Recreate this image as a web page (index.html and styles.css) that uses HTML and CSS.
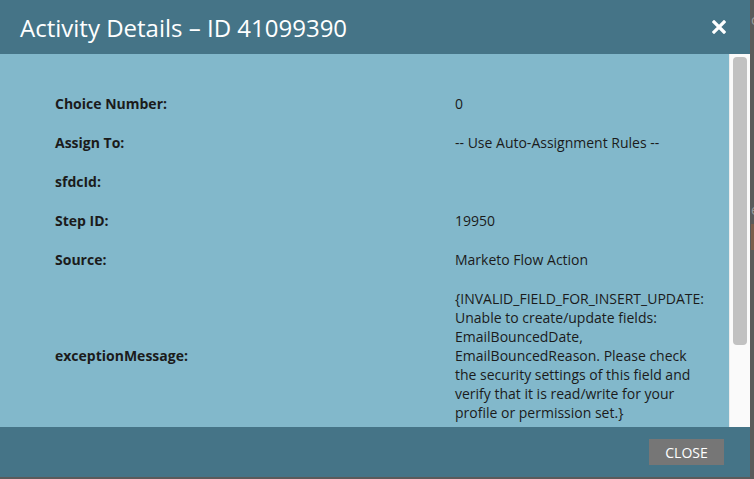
FILE: index.html
```html
<!DOCTYPE html>
<html lang="en">
<head>
    <meta charset="UTF-8">
    <title>Activity Details</title>
    <link rel="stylesheet" href="styles.css">
</head>
<body>
    <div class="modal">
        <div class="modal-header">
            <h1 class="modal-title">Activity Details &ndash; ID 41099390</h1>
            <button class="modal-x" aria-label="Close">
                <svg width="14" height="14" viewBox="0 0 14 14">
                    <path d="M2 2 L12 12 M12 2 L2 12" stroke="#fff" stroke-width="3.2" stroke-linecap="square"/>
                </svg>
            </button>
        </div>
        <div class="modal-body">
            <div class="body-content">
                <div class="details">
                    <div class="label">Choice Number:</div>
                    <div class="value">0</div>
                    <div class="label">Assign To:</div>
                    <div class="value">-- Use Auto-Assignment Rules --</div>
                    <div class="label">sfdcId:</div>
                    <div class="value"></div>
                    <div class="label">Step ID:</div>
                    <div class="value">19950</div>
                    <div class="label">Source:</div>
                    <div class="value">Marketo Flow Action</div>
                    <div class="label">exceptionMessage:</div>
                    <div class="value">{INVALID_FIELD_FOR_INSERT_UPDATE: Unable to create/update fields: EmailBouncedDate, EmailBouncedReason. Please check the security settings of this field and verify that it is read/write for your profile or permission set.}</div>
                </div>
            </div>
            <div class="scrollbar">
                <div class="thumb"></div>
            </div>
        </div>
        <div class="modal-footer">
            <button class="btn-close">CLOSE</button>
        </div>
    </div>
    <div class="backdrop">
        <span class="bg-c">c</span>
        <span class="bg-e">e</span>
        <span class="bg-bar"></span>
    </div>
</body>
</html>
```

FILE: styles.css
```css
body {
    margin: 0;
    height: 479px;
    display: flex;
    align-items: flex-start;
    background: #5b5b5b;
    font-family: 'Open Sans', sans-serif;
    overflow: hidden;
}
.modal {
    width: 750px;
    height: 477px;
    display: flex;
    flex-direction: column;
    flex-shrink: 0;
}
.modal-header {
    height: 54px;
    background: #457487;
    display: flex;
    align-items: center;
    justify-content: space-between;
    padding: 0 24px 0 20px;
}
.modal-title {
    margin: 0;
    font-size: 24px;
    font-weight: 400;
    color: #fff;
}
.modal-x {
    background: none;
    border: none;
    padding: 0;
    width: 14px;
    height: 14px;
    cursor: pointer;
}
.modal-body {
    flex: 1;
    min-height: 0;
    display: flex;
    background: #82b8cb;
    color: #1b1b1b;
    font-size: 14px;
    line-height: 19px;
}
.body-content {
    flex: 1;
    overflow: hidden;
}
.scrollbar {
    width: 14px;
    background: #fafafa;
    border-left: 1px solid #ececec;
    padding: 3px 3px 0 3px;
}
.thumb {
    height: 288px;
    background: #c1c1c1;
    border-radius: 4px;
}
.details {
    display: grid;
    grid-template-columns: 400px 252px;
    align-items: center;
    padding: 30px 0 40px 55px;
}
.label, .value {
    padding: 10px 0;
}
.label {
    font-weight: 700;
}
.modal-footer {
    height: 50px;
    background: #457487;
    display: flex;
    align-items: center;
    justify-content: flex-end;
    padding-right: 26px;
}
.btn-close {
    width: 75px;
    height: 26px;
    background: #767676;
    color: #fff;
    border: none;
    font-family: 'Open Sans', sans-serif;
    font-size: 14px;
    padding: 0;
}
.backdrop {
    flex: 1;
    position: relative;
    height: 479px;
    overflow: hidden;
    color: #999;
    font-family: 'Open Sans', sans-serif;
    font-size: 14px;
}
.backdrop span {
    position: absolute;
    left: 1px;
}
.bg-c { top: 10px; }
.bg-e { top: 200px; }
.bg-bar {
    top: 224px;
    height: 26px;
    width: 20px;
    background: #7c5f4d;
}
```
